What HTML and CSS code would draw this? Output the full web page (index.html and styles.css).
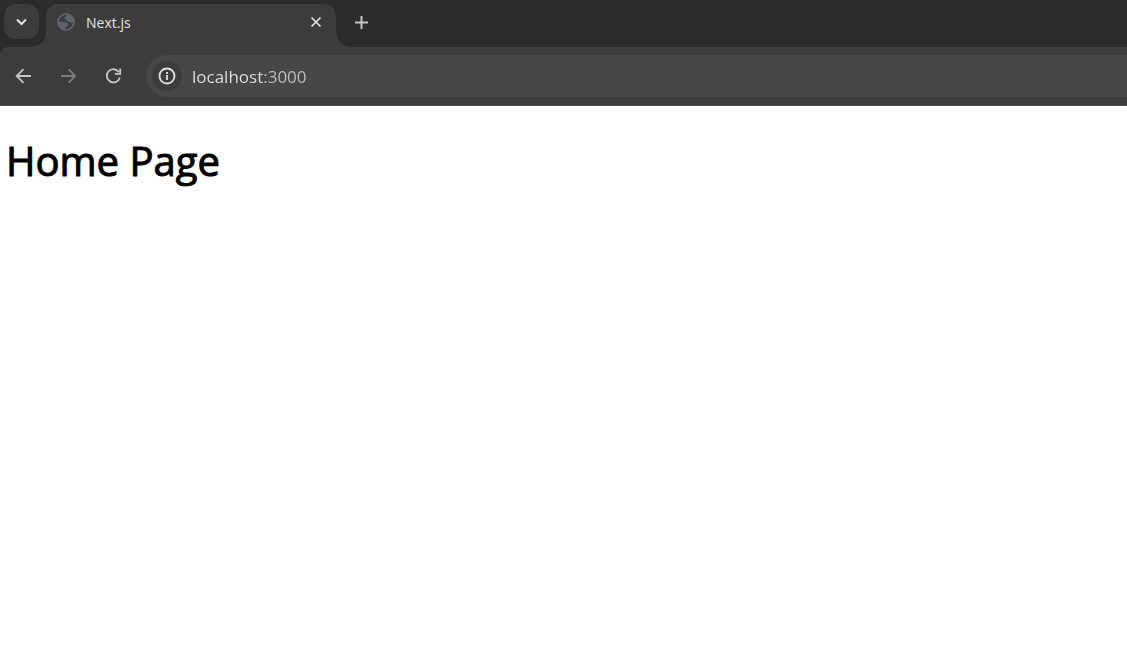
FILE: index.html
```
<!DOCTYPE html>
<html lang="en">
<head>
<meta charset="utf-8">
<title>Next.js</title>
<link rel="stylesheet" href="styles.css">
</head>
<body>
<header class="browser">
  <div class="tab-strip">
    <button class="tab-search" aria-label="Search tabs">
      <svg class="icon" width="20" height="20" viewBox="0 0 20 20"><path d="M5 7.500l4.500 4.500L14 7.500" stroke-width="2"/></svg>
    </button>
    <div class="tab">
      <svg class="globe" width="20" height="20" viewBox="0 0 20 20"><circle cx="10" cy="10" r="9"/><path d="M3 9.500C3.200 6 6 3.300 10.500 3C11 4.500 8.500 4.500 8.500 6C8.500 7.500 10 7 11 8.500C12 10 14 10.500 17 10.500C16.500 14.500 13.500 17 9.500 17C8.500 15.500 11 15 12 13.500C13 11.500 11.500 10.500 9.500 10.500C7 10.500 6 9.500 3 9.500Z"/></svg>
      <span class="tab-title">Next.js</span>
      <button class="plain" aria-label="Close tab">
        <svg class="icon bright" width="20" height="20" viewBox="0 0 20 20"><path d="M5.500 5.500l9 9M14.500 5.500l-9 9" stroke-width="1.700"/></svg>
      </button>
    </div>
    <button class="plain new-tab" aria-label="New tab">
      <svg class="icon" width="20" height="20" viewBox="0 0 20 20"><path d="M10.500 4v13M4 10.500h13" stroke-width="2"/></svg>
    </button>
  </div>
  <div class="toolbar">
    <nav class="nav">
      <button class="plain" aria-label="Back">
        <svg class="icon" width="20" height="20" viewBox="0 0 20 20"><path d="M17 10H3.500M9.500 3.200L2.700 10l6.800 6.800" stroke-width="1.800"/></svg>
      </button>
      <button class="plain" aria-label="Forward" disabled>
        <svg class="icon" width="20" height="20" viewBox="0 0 20 20"><path d="M2 10h14M9.500 3.200l6.800 6.800L9.500 16.800" stroke-width="1.800"/></svg>
      </button>
      <button class="plain" aria-label="Reload">
        <svg class="icon" width="20" height="20" viewBox="0 0 20 20"><path d="M15.800 11.500A6.600 6.600 0 1 1 14.800 6M16.200 2.500v5.300h-5.400" stroke-width="1.800"/></svg>
      </button>
    </nav>
    <div class="omnibox">
      <button class="site-info" aria-label="View site information">
        <svg class="icon bright" width="20" height="20" viewBox="0 0 20 20"><circle cx="10" cy="10" r="7.500" stroke-width="1.800"/><path d="M10 9v5M10 6v2" stroke-width="1.800"/></svg>
      </button>
      <input class="address" type="text" aria-label="Address" value="localhost:3000" spellcheck="false">
    </div>
  </div>
</header>
<main class="page">
  <h1>Home Page</h1>
</main>
</body>
</html>
```
FILE: styles.css
```
* {
  box-sizing: border-box;
}

body {
  margin: 0;
  background: #fff;
  font-family: "Open Sans", "Noto Sans", sans-serif;
}

button {
  display: grid;
  place-items: center;
  padding: 0;
  border: 0;
  color: inherit;
}

.browser {
  background: #2b2b2b;
  color: #c7c7c7;
}

.tab-strip {
  display: flex;
  align-items: flex-start;
  height: 47px;
  padding: 4px 4px 0;
}

.tab-search {
  width: 35px;
  height: 35px;
  margin-right: 7px;
  border-radius: 12px;
  background: #3c3c3c;
  color: #e3e3e3;
}

.tab {
  position: relative;
  display: flex;
  align-items: center;
  width: 290px;
  height: 43px;
  padding: 0 10px 7px;
  border-radius: 12px 12px 0 0;
  background: #3c3c3c;
}

.tab::before,
.tab::after {
  content: "";
  position: absolute;
  bottom: 0;
  width: 14px;
  height: 14px;
}

.tab::before {
  right: 100%;
  background: radial-gradient(circle at 0 0, transparent 13px, #3c3c3c 14px);
}

.tab::after {
  left: 100%;
  background: radial-gradient(circle at 100% 0, transparent 13px, #3c3c3c 14px);
}

.tab-title {
  flex: 1;
  margin-left: 10px;
  padding-top: 2px;
  color: #e3e3e3;
  font-size: 14px;
  line-height: 20px;
}

.plain {
  background: none;
}

.plain:disabled {
  color: #7c7c7c;
}

.new-tab {
  margin: 8px 0 0 15px;
}

.icon {
  display: block;
  fill: none;
  stroke: currentColor;
}

.bright {
  color: #e3e3e3;
}

.globe {
  fill: #5f6368;
}

.globe path {
  fill: #3c3c3c;
}

.toolbar {
  display: flex;
  align-items: center;
  height: 59px;
  padding-left: 14px;
  border-bottom: 1px solid #484848;
  border-top-left-radius: 8px;
  background: #3c3c3c;
}

.nav {
  display: flex;
  gap: 25px;
  margin-right: 22px;
}

.omnibox {
  display: flex;
  flex: 1;
  align-items: center;
  gap: 10px;
  height: 42px;
  padding-left: 6px;
  border-radius: 21px 0 0 21px;
  background: #474747;
}

.site-info {
  width: 30px;
  height: 30px;
  border-radius: 50%;
  background: #3c3c3c;
}

.address {
  flex: 1;
  min-width: 0;
  padding: 2px 0 0;
  border: 0;
  outline: 0;
  background: linear-gradient(to right, #e3e3e3 70px, #c0c0c0 70px);
  background-clip: text;
  color: transparent;
  font-family: "Open Sans", sans-serif;
  font-size: 17px;
  line-height: 24px;
}

.page {
  padding: 27px 6px;
}

h1 {
  margin: 0;
  font-size: 40px;
  font-weight: 400;
  line-height: 56px;
  -webkit-text-stroke: 1px #000;
}
```
